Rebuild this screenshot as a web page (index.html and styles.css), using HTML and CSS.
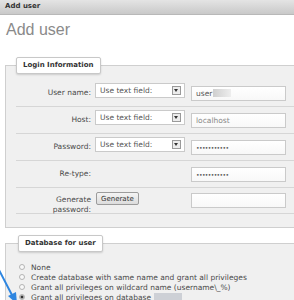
FILE: index.html
```html
<!DOCTYPE html>
<html>
  <head>
    <meta charset="UTF-8" />
    <title>Add user</title>
    <link rel="stylesheet" href="styles.css">
  </head>
  <body>
    <div class="topbar">Add user</div>
    <div class="page">
      <h1 class="title">Add user</h1>

      <fieldset class="box login">
        <legend>Login Information</legend>
        <div class="row">
          <label class="label">User name:</label>
          <div class="select">Use text field:<span class="caret"></span></div>
          <div class="field">user<span class="smudge"></span></div>
        </div>
        <div class="row">
          <label class="label">Host:</label>
          <div class="select">Use text field:<span class="caret"></span></div>
          <div class="field muted">localhost</div>
        </div>
        <div class="row">
          <label class="label">Password:</label>
          <div class="select">Use text field:<span class="caret"></span></div>
          <div class="field dots">&bull;&bull;&bull;&bull;&bull;&bull;&bull;&bull;&bull;&bull;&bull;</div>
        </div>
        <div class="row">
          <label class="label">Re-type:</label>
          <div class="spacer"></div>
          <div class="field dots">&bull;&bull;&bull;&bull;&bull;&bull;&bull;&bull;&bull;&bull;&bull;</div>
        </div>
        <div class="row last">
          <label class="label two">Generate<br>password:</label>
          <div class="spacer"><button class="btn">Generate</button></div>
          <div class="field gen"></div>
        </div>
      </fieldset>

      <fieldset class="box db">
        <legend>Database for user</legend>
        <label class="opt"><input type="radio" name="db"> None</label>
        <label class="opt"><input type="radio" name="db"> Create database with same name and grant all privileges</label>
        <label class="opt"><input type="radio" name="db"> Grant all privileges on wildcard name (username\_%)</label>
        <label class="opt"><input type="radio" name="db" checked> Grant all privileges on database <span class="blur"></span></label>
      </fieldset>

      <svg class="arrow" width="30" height="45" viewBox="0 0 30 45">
        <line x1="3" y1="3" x2="18" y2="32" stroke="#2f86e0" stroke-width="2" stroke-linecap="round" />
        <polygon points="22,39 13,31 21,27" fill="#2f86e0" />
      </svg>
    </div>
  </body>
</html>
```

FILE: styles.css
```css
html, body {
  margin: 0;
  overflow: hidden;
}
body {
  font-family: 'DejaVu Sans', Verdana, sans-serif;
  font-size: 7.5px;
  color: #4a4a4a;
  background: #fff;
}
.topbar {
  height: 14px;
  line-height: 12px;
  padding-left: 5px;
  font-size: 7px;
  font-weight: bold;
  color: #333;
  background: linear-gradient(#e4e4e4, #c9c9c9);
  border-bottom: 1px solid #b8b8b8;
}
.page {
  position: relative;
  width: 300px;
  padding-left: 5px;
}
.title {
  margin: 5px 0 17px 1px;
  font-family: 'Liberation Sans', Arial, sans-serif;
  font-size: 16px;
  line-height: 20px;
  font-weight: normal;
  color: #8a8a8a;
}
.box {
  margin: 0;
  min-width: 0;
  border: 1px solid #cfcfcf;
  background: #f0f0f0;
}
.box legend {
  padding: 3px 6px;
  line-height: 9px;
  font-size: 7px;
  font-weight: bold;
  color: #333;
  background: #fff;
  border: 1px solid #c8c8c8;
  border-radius: 2px;
  box-shadow: 0 1px 2px rgba(0, 0, 0, 0.15);
}
.login {
  padding: 6px 0 13px 10px;
}
.row {
  display: flex;
  align-items: flex-start;
  height: 26px;
  border-bottom: 1px solid #d6d6d6;
}
.row.last {
  height: 25px;
}
.label {
  width: 75px;
  padding-top: 8px;
  line-height: 9px;
  text-align: right;
  color: #4a4a4a;
}
.label.two {
  padding-top: 7px;
  line-height: 10px;
}
.select {
  display: flex;
  align-items: center;
  justify-content: space-between;
  box-sizing: border-box;
  width: 90px;
  height: 15px;
  margin: 3px 0 0 4px;
  padding: 0 3px 0 4px;
  color: #555;
  background: #fff;
  border: 1px solid #cacaca;
}
.caret {
  position: relative;
  box-sizing: border-box;
  width: 9px;
  height: 9px;
  background: #ececec;
  border: 1px solid #9a9a9a;
}
.caret::after {
  content: '';
  position: absolute;
  left: 1px;
  top: 2px;
  border-left: 2.5px solid transparent;
  border-right: 2.5px solid transparent;
  border-top: 3px solid #333;
}
.spacer {
  width: 90px;
  margin-left: 4px;
}
.field {
  box-sizing: border-box;
  width: 95px;
  height: 15px;
  margin: 6px 0 0 6px;
  padding-left: 4px;
  line-height: 13px;
  color: #555;
  background: linear-gradient(#fff, #f8f8f8);
  border: 1px solid #cacaca;
}
.field.muted {
  color: #888;
}
.field.dots {
  font-size: 6px;
  letter-spacing: -0.6px;
  color: #555;
}
.field.gen {
  margin-top: 5px;
}
.smudge {
  display: inline-block;
  width: 18px;
  height: 8px;
  margin-left: 1px;
  vertical-align: -1px;
  background: linear-gradient(90deg, #cfcfcf, #eee);
}
.btn {
  margin: 4px 0 0 1px;
  height: 13px;
  padding: 0 4px;
  font-family: inherit;
  font-size: 7px;
  line-height: 10px;
  color: #333;
  background: linear-gradient(#f4f4f4, #dcdcdc);
  border: 1px solid #9c9c9c;
  border-radius: 2px;
}
.db {
  margin-top: 7px;
  padding: 10px 0 10px 12px;
}
.opt {
  display: flex;
  align-items: center;
  height: 10px;
  color: #4a4a4a;
  white-space: nowrap;
}
.opt input {
  appearance: none;
  box-sizing: border-box;
  width: 6px;
  height: 6px;
  margin: 0 6px 0 1px;
  border: 1px solid #b4b4b4;
  border-radius: 50%;
  background: #f8f8f8;
}
.opt input:checked {
  background: radial-gradient(#333 40%, #bbb 60%);
}
.blur {
  display: inline-block;
  width: 28px;
  height: 8px;
  margin-left: 3px;
  background: #cdd0d6;
}
.arrow {
  position: absolute;
  left: -5px;
  top: 245px;
}
```
